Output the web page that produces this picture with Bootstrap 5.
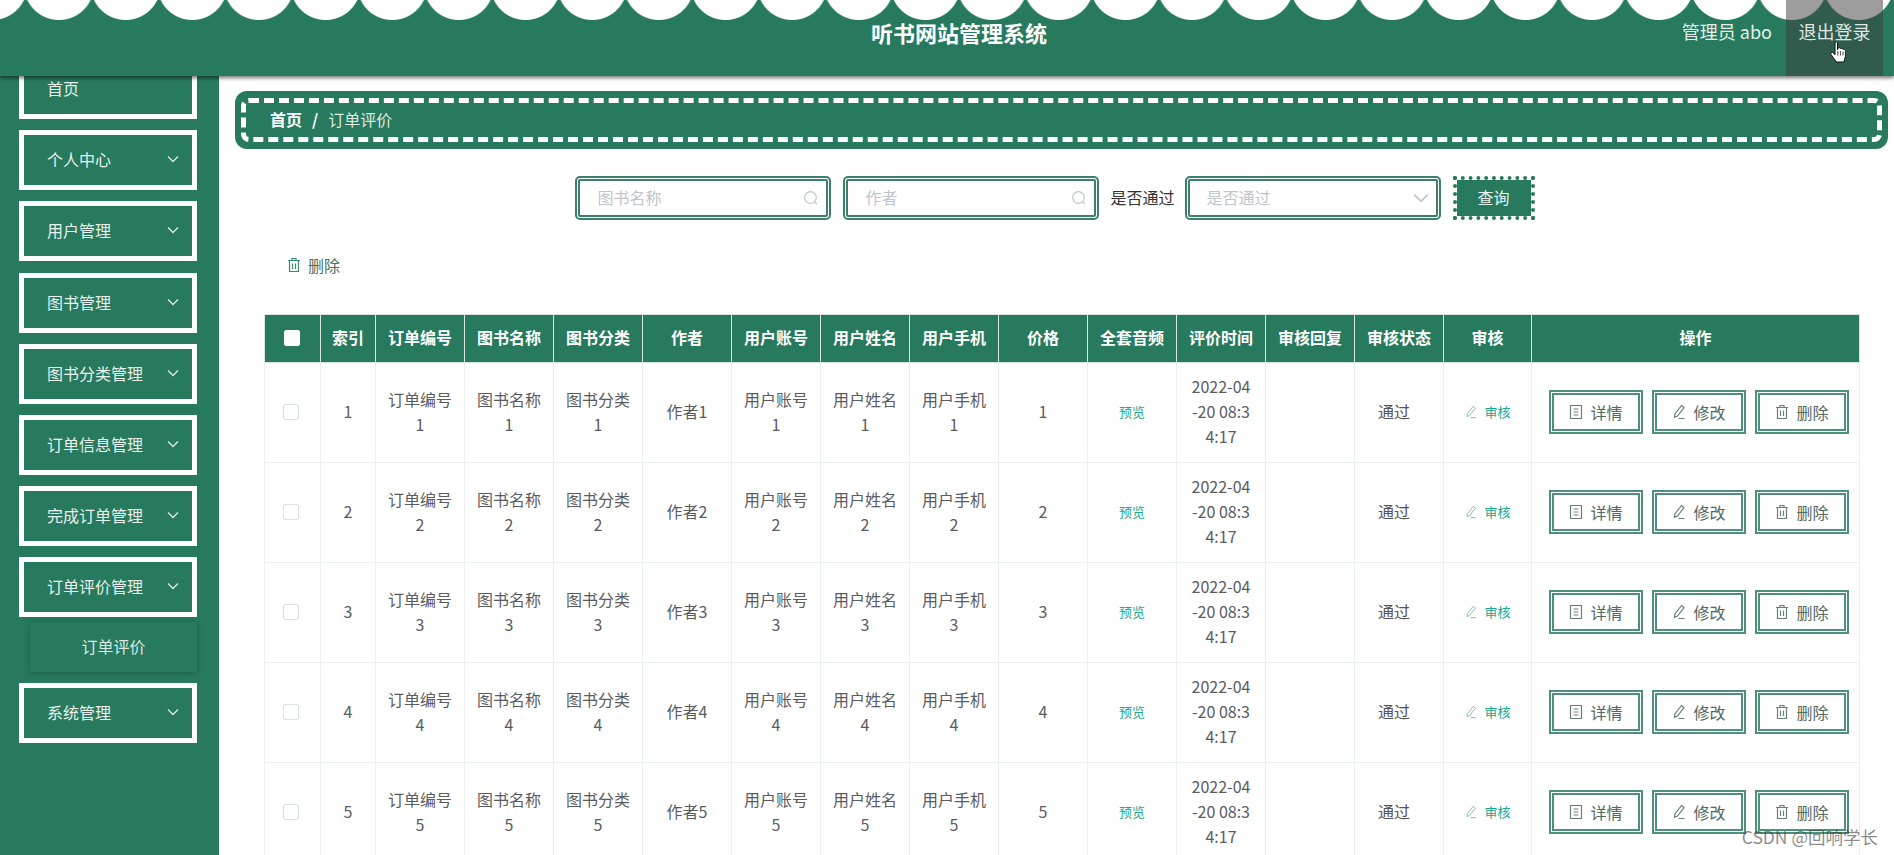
<!DOCTYPE html>
<html lang="zh-CN">
<head>
<meta charset="utf-8">
<title>听书网站管理系统</title>
<link rel="stylesheet" href="https://cdn.jsdelivr.net/npm/bootstrap@5.3.0/dist/css/bootstrap.min.css">
<style>
:root{--g:#277a5d}
html,body{height:100%}
body{width:1894px;height:855px;overflow:hidden;font-family:"Noto Sans CJK SC","Liberation Sans",sans-serif;font-size:16px;color:#606266;background:#fff;position:relative}
.x-head{height:76px;background-color:var(--g);background-image:radial-gradient(circle at 33.33px -15px,#fff 34.5px,transparent 35.5px);background-size:66.67px 30px;background-position:25.67px 0;background-repeat:repeat-x;box-shadow:0 2px 4px rgba(0,0,0,.55);position:relative;z-index:2;color:#fff}
.x-title{font-size:22px;font-weight:700;line-height:32px;padding-top:16px;padding-left:236px}
.x-user{font-size:18px;line-height:28px;padding-top:17px;color:#e4efea;margin-right:14px}
.x-logout{width:97px;height:76px;margin-right:11px;background:rgba(60,60,60,.5);font-size:18px;line-height:28px;padding-top:17px;text-align:center;color:#dfe6e3;position:relative}
.x-hand{position:absolute;left:44px;top:41px;width:18px;height:24px}
.x-body{height:779px}
.x-side{width:219px;background:var(--g);overflow:hidden;flex:none;padding:0 22px 0 19px}
.x-item{height:60px;border:5px solid #fff;margin-bottom:11.2px;padding:0 13px 2px 23px;color:#e8f1ed;line-height:48px}
.x-item:first-child{margin-top:-17px}
.x-chev{width:12px;height:8px;fill:none;stroke:#dbe9e3;stroke-width:1.3}
.x-sub{height:50px;margin:-6.5px 0 11.4px 11px;line-height:48px;text-align:center;color:#dbe9e3;box-shadow:0 1px 6px rgba(0,0,0,.25)}
.x-main{flex:1;min-width:0;overflow:hidden}
.x-crumb{margin:15px 6px 0 16px;padding:7px 6px;height:58px;background:var(--g);border-radius:12px}
.x-crumb-in{height:44px;border:5px dashed #fff;border-radius:8px;padding-left:24px}
.x-crumb .breadcrumb{--bs-breadcrumb-margin-bottom:0;--bs-breadcrumb-item-padding-x:10px;--bs-breadcrumb-divider-color:#fff;--bs-breadcrumb-item-active-color:#dfeae5;line-height:32px;font-size:16px}
.x-crumb .breadcrumb-item:first-child{font-weight:700;color:#fff}
.x-crumb .breadcrumb-item+.breadcrumb-item::before{font-weight:700}
.x-search{margin-top:27px;height:44px;gap:12px;padding-right:3px}
.x-field{width:256px;height:44px;border:5px double #3d7f6d;border-radius:5px;position:relative}
.x-field .form-control{height:32px;border:0;border-radius:0;padding:0 30px 0 17px;font-size:16px;background:transparent;color:#606266}
.x-field .form-control::placeholder{color:#c0c4cc}
.x-field-ic{position:absolute;right:7px;top:9px;width:16px;height:16px;fill:none;stroke:#c0c4cc;stroke-width:1.2}
.x-label{color:#333;line-height:42px;margin:0 -2px 0 -1px}
.x-query{width:82px;height:44px;border:4px dotted var(--g);background:var(--g);background-clip:padding-box;color:#e8f1ed;border-radius:0;padding:0 0 2px;font-size:16px}
.x-tools{margin:24px 0 0 68px;height:42px;gap:7px;color:#4f6f66;line-height:42px}
.x-tools .x-ic{color:#3a8a70}
.x-ic{width:14px;height:16px;fill:none;stroke:currentColor;stroke-width:1.2;flex:none}
.x-grid{table-layout:fixed;width:1595px;margin:28px 0 0 45px;border-collapse:collapse;--bs-table-color:#5a5c60;--bs-table-bg:#fff;--bs-table-border-color:#ebeef5}
.x-grid>:not(caption)>*>*{padding:0 12px 2px;border:1px solid #ebeef5;text-align:center;vertical-align:middle;line-height:25px;word-break:break-all;box-shadow:none}
.x-grid>thead>tr>th{background:var(--g);color:#fff;height:48px;border-color:#d6e6df;font-weight:700;padding:0 4px 2px;white-space:nowrap}
.x-grid>tbody>tr>td{height:100px}
.x-grid>tbody>tr>td.x-state{padding-right:22px;color:#555}
.x-w56{width:56px}.x-w55{width:55px}.x-w89{width:89px}.x-w88{width:88px}.x-w328{width:328px}
.x-box{display:block;width:16px;height:16px;margin:0 auto 0 6px;border:1px solid #dcdfe6;border-radius:2px;background:#fff}
.x-grid>thead .x-box-on{border-color:#fff;margin-left:15px}
.x-teal{color:#1aa88e;font-size:13px}
.x-audit{width:14px;height:14px;margin-right:6px;vertical-align:-2px;fill:none;stroke:#7fbfae;stroke-width:1.1}
.x-acts{gap:9px;padding-left:5px;margin-right:-4px}
.x-act{width:94px;height:44px;flex:none;border:5px double #4f8f7d;background:#fff;border-radius:0;padding:0;font-size:16px;line-height:30px;gap:7px;color:#4f6963}
.x-act svg{width:14px;height:16px;fill:none;stroke:#6a7f78;stroke-width:1.2}
.x-mark{position:absolute;right:16px;bottom:6px;font-size:17.5px;line-height:24px;color:rgba(60,60,60,.6);z-index:3}
</style>
</head>
<body>
<svg width="0" height="0" class="position-absolute">
<symbol id="i-trash" viewBox="0 0 14 16"><path d="M1 3.500h12M5 3.500V1.500h4v2M2.500 3.500v11h9v-11M5.500 6.500v5.500M8.500 6.500v5.500"/></symbol>
<symbol id="i-doc" viewBox="0 0 14 16"><path d="M1.500 1.500h11v13h-11zM4.500 5h5M4.500 8h5M4.500 11h5"/></symbol>
<symbol id="i-pen" viewBox="0 0 14 16"><path d="M9.500 1.500l2.500 2-6.500 8.500-3 1.200.4-3.200zM6.500 14.500h6"/></symbol>
<symbol id="i-find" viewBox="0 0 16 16"><circle cx="7.500" cy="7.500" r="5.800"/><path d="M11.500 11.700l2.500 2.500"/></symbol>
<symbol id="i-chev" viewBox="0 0 12 8"><path d="M1 1.500l5 5 5-5"/></symbol>
</svg>

<header class="x-head d-flex align-items-start">
  <div class="x-title flex-grow-1 text-center">听书网站管理系统</div>
  <div class="x-user">管理员 abo</div>
  <div class="x-logout">退出登录
    <svg class="x-hand" viewBox="0 0 18 24"><path d="M5 2c0-1.600 2.500-1.600 2.500 0v7l.5-2c1-.7 2.200-.4 2.400.6.900-.6 2.100-.3 2.400.7.900-.5 2.300 0 2.600 1.200.4 2.500.3 5.500-.4 7.500-.4 1.200-.8 2.500-1 4H6c-.5-1.800-1.700-3.100-3-4.700L1 13.500c-.8-1.600 1-2.700 2.200-1.600L5 13.700z" fill="#fff" stroke="#111" stroke-width="1"/><path d="M7.800 10v4.500M10.400 10v4.500M13 10.500v4" stroke="#111" stroke-width=".8" fill="none"/></svg>
  </div>
</header>

<div class="x-body d-flex">
  <aside class="x-side">
    <div class="x-item">首页</div>
    <div class="x-item d-flex justify-content-between align-items-center">个人中心<svg class="x-chev"><use href="#i-chev"/></svg></div>
    <div class="x-item d-flex justify-content-between align-items-center">用户管理<svg class="x-chev"><use href="#i-chev"/></svg></div>
    <div class="x-item d-flex justify-content-between align-items-center">图书管理<svg class="x-chev"><use href="#i-chev"/></svg></div>
    <div class="x-item d-flex justify-content-between align-items-center">图书分类管理<svg class="x-chev"><use href="#i-chev"/></svg></div>
    <div class="x-item d-flex justify-content-between align-items-center">订单信息管理<svg class="x-chev"><use href="#i-chev"/></svg></div>
    <div class="x-item d-flex justify-content-between align-items-center">完成订单管理<svg class="x-chev"><use href="#i-chev"/></svg></div>
    <div class="x-item d-flex justify-content-between align-items-center">订单评价管理<svg class="x-chev"><use href="#i-chev"/></svg></div>
    <div class="x-sub">订单评价</div>
    <div class="x-item d-flex justify-content-between align-items-center">系统管理<svg class="x-chev"><use href="#i-chev"/></svg></div>
  </aside>

  <main class="x-main">
    <nav class="x-crumb">
      <div class="x-crumb-in">
        <ol class="breadcrumb">
          <li class="breadcrumb-item">首页</li>
          <li class="breadcrumb-item active">订单评价</li>
        </ol>
      </div>
    </nav>

    <form class="x-search d-flex justify-content-center">
      <div class="x-field"><input class="form-control" placeholder="图书名称"><svg class="x-field-ic"><use href="#i-find"/></svg></div>
      <div class="x-field"><input class="form-control" placeholder="作者"><svg class="x-field-ic"><use href="#i-find"/></svg></div>
      <span class="x-label">是否通过</span>
      <div class="x-field"><input class="form-control" placeholder="是否通过"><svg class="x-field-ic"><use href="#i-chev"/></svg></div>
      <button type="button" class="btn x-query">查询</button>
    </form>

    <div class="x-tools d-flex align-items-center"><svg class="x-ic"><use href="#i-trash"/></svg><span>删除</span></div>

    <table class="table x-grid">
      <thead>
        <tr>
          <th class="x-w56"><span class="x-box x-box-on"></span></th><th class="x-w55">索引</th><th class="x-w89">订单编号</th><th class="x-w89">图书名称</th><th class="x-w89">图书分类</th><th class="x-w89">作者</th><th class="x-w89">用户账号</th><th class="x-w89">用户姓名</th><th class="x-w89">用户手机</th><th class="x-w89">价格</th><th class="x-w89">全套音频</th><th class="x-w89">评价时间</th><th class="x-w89">审核回复</th><th class="x-w89">审核状态</th><th class="x-w88">审核</th><th class="x-w328">操作</th>
        </tr>
      </thead>
      <tbody>
        <tr><td><span class="x-box"></span></td><td>1</td><td>订单编号1</td><td>图书名称1</td><td>图书分类1</td><td>作者1</td><td>用户账号1</td><td>用户姓名1</td><td>用户手机1</td><td>1</td><td class="x-teal">预览</td><td>2022-04-20 08:34:17</td><td></td><td class="x-state">通过</td><td class="x-teal"><svg class="x-audit"><use href="#i-pen"/></svg>审核</td><td><div class="x-acts d-flex"><button type="button" class="btn x-act d-flex align-items-center justify-content-center"><svg><use href="#i-doc"/></svg>详情</button><button type="button" class="btn x-act d-flex align-items-center justify-content-center"><svg><use href="#i-pen"/></svg>修改</button><button type="button" class="btn x-act d-flex align-items-center justify-content-center"><svg><use href="#i-trash"/></svg>删除</button></div></td></tr>
        <tr><td><span class="x-box"></span></td><td>2</td><td>订单编号2</td><td>图书名称2</td><td>图书分类2</td><td>作者2</td><td>用户账号2</td><td>用户姓名2</td><td>用户手机2</td><td>2</td><td class="x-teal">预览</td><td>2022-04-20 08:34:17</td><td></td><td class="x-state">通过</td><td class="x-teal"><svg class="x-audit"><use href="#i-pen"/></svg>审核</td><td><div class="x-acts d-flex"><button type="button" class="btn x-act d-flex align-items-center justify-content-center"><svg><use href="#i-doc"/></svg>详情</button><button type="button" class="btn x-act d-flex align-items-center justify-content-center"><svg><use href="#i-pen"/></svg>修改</button><button type="button" class="btn x-act d-flex align-items-center justify-content-center"><svg><use href="#i-trash"/></svg>删除</button></div></td></tr>
        <tr><td><span class="x-box"></span></td><td>3</td><td>订单编号3</td><td>图书名称3</td><td>图书分类3</td><td>作者3</td><td>用户账号3</td><td>用户姓名3</td><td>用户手机3</td><td>3</td><td class="x-teal">预览</td><td>2022-04-20 08:34:17</td><td></td><td class="x-state">通过</td><td class="x-teal"><svg class="x-audit"><use href="#i-pen"/></svg>审核</td><td><div class="x-acts d-flex"><button type="button" class="btn x-act d-flex align-items-center justify-content-center"><svg><use href="#i-doc"/></svg>详情</button><button type="button" class="btn x-act d-flex align-items-center justify-content-center"><svg><use href="#i-pen"/></svg>修改</button><button type="button" class="btn x-act d-flex align-items-center justify-content-center"><svg><use href="#i-trash"/></svg>删除</button></div></td></tr>
        <tr><td><span class="x-box"></span></td><td>4</td><td>订单编号4</td><td>图书名称4</td><td>图书分类4</td><td>作者4</td><td>用户账号4</td><td>用户姓名4</td><td>用户手机4</td><td>4</td><td class="x-teal">预览</td><td>2022-04-20 08:34:17</td><td></td><td class="x-state">通过</td><td class="x-teal"><svg class="x-audit"><use href="#i-pen"/></svg>审核</td><td><div class="x-acts d-flex"><button type="button" class="btn x-act d-flex align-items-center justify-content-center"><svg><use href="#i-doc"/></svg>详情</button><button type="button" class="btn x-act d-flex align-items-center justify-content-center"><svg><use href="#i-pen"/></svg>修改</button><button type="button" class="btn x-act d-flex align-items-center justify-content-center"><svg><use href="#i-trash"/></svg>删除</button></div></td></tr>
        <tr><td><span class="x-box"></span></td><td>5</td><td>订单编号5</td><td>图书名称5</td><td>图书分类5</td><td>作者5</td><td>用户账号5</td><td>用户姓名5</td><td>用户手机5</td><td>5</td><td class="x-teal">预览</td><td>2022-04-20 08:34:17</td><td></td><td class="x-state">通过</td><td class="x-teal"><svg class="x-audit"><use href="#i-pen"/></svg>审核</td><td><div class="x-acts d-flex"><button type="button" class="btn x-act d-flex align-items-center justify-content-center"><svg><use href="#i-doc"/></svg>详情</button><button type="button" class="btn x-act d-flex align-items-center justify-content-center"><svg><use href="#i-pen"/></svg>修改</button><button type="button" class="btn x-act d-flex align-items-center justify-content-center"><svg><use href="#i-trash"/></svg>删除</button></div></td></tr>
      </tbody>
    </table>
  </main>
</div>
<div class="x-mark">CSDN @回响学长</div>
<script src="https://cdn.jsdelivr.net/npm/bootstrap@5.3.0/dist/js/bootstrap.bundle.min.js"></script>
</body>
</html>
